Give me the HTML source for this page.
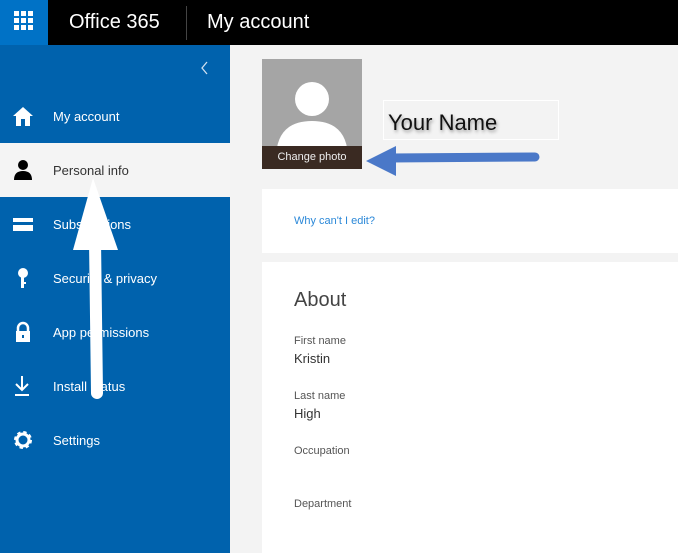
<!DOCTYPE html>
<html><head><style>
*{margin:0;padding:0;box-sizing:border-box}
body{width:678px;height:553px;overflow:hidden;background:#f3f3f3;font-family:"Liberation Sans",sans-serif;position:relative}
.abs{position:absolute}
.top{left:0;top:0;width:678px;height:45px;background:#000}
.waf{left:0;top:0;width:48px;height:45px;background:#0072c6}
.side{left:0;top:45px;width:230px;height:508px;background:#0062ad}
.item{position:absolute;left:0;width:230px;height:54px;color:#fff;font-size:13px}
.item span{position:absolute;left:53px;top:20px}
.item svg{position:absolute;left:12px;top:16px}
.lbl{color:#555;font-size:11px;position:absolute;left:32px}
.val{color:#333;font-size:13px;position:absolute;left:32px}
</style></head><body>
<div class="abs top"></div>
<div class="abs waf">
<svg width="48" height="45"><g fill="#fff">
<rect x="14" y="11" width="5" height="5"/><rect x="21" y="11" width="5" height="5"/><rect x="28" y="11" width="5" height="5"/>
<rect x="14" y="18" width="5" height="5"/><rect x="21" y="18" width="5" height="5"/><rect x="28" y="18" width="5" height="5"/>
<rect x="14" y="25" width="5" height="5"/><rect x="21" y="25" width="5" height="5"/><rect x="28" y="25" width="5" height="5"/></g></svg></div>
<div class="abs" style="left:69px;top:11px;color:#fff;font-size:20px">Office 365</div>
<div class="abs" style="left:186px;top:6px;width:1px;height:34px;background:#444"></div>
<div class="abs" style="left:207px;top:11px;color:#fff;font-size:20px">My account</div>
<div class="abs side">
<svg style="position:absolute;left:200px;top:16px" width="10" height="14"><path d="M7 1 L2 7 L7 13" stroke="#cfe0f0" stroke-width="1.3" fill="none"/></svg>
<div class="item" style="top:44px"><svg width="22" height="22"><path d="M11 2 L21 11 L18 11 L18 21 L4 21 L4 11 L1 11Z" fill="#fff"/><rect x="9" y="14" width="4" height="7" fill="#0062ad"/></svg><span>My account</span></div>
<div class="item" style="top:98px;background:#f4f4f4;color:#333"><svg width="22" height="22"><circle cx="11" cy="6" r="5" fill="#000"/><path d="M2 21 Q2 12 11 12 Q20 12 20 21Z" fill="#000"/></svg><span>Personal info</span></div>
<div class="item" style="top:152px"><svg width="22" height="22"><rect x="1" y="5" width="20" height="13" fill="#fff"/><rect x="1" y="9" width="20" height="3" fill="#0062ad"/></svg><span>Subscriptions</span></div>
<div class="item" style="top:206px"><svg width="22" height="22"><circle cx="11" cy="6" r="5" fill="#fff"/><rect x="9" y="9" width="3" height="12" fill="#fff"/><rect x="12" y="15" width="2" height="2" fill="#fff"/></svg><span>Security &amp; privacy</span></div>
<div class="item" style="top:260px"><svg width="22" height="22"><path d="M6 10 V7 A5 5 0 0 1 16 7 V10" stroke="#fff" stroke-width="2.5" fill="none"/><rect x="4" y="10" width="14" height="11" fill="#fff"/><rect x="10" y="14" width="2" height="3" fill="#0062ad"/></svg><span>App permissions</span></div>
<div class="item" style="top:314px"><svg width="22" height="22"><path d="M10 1 V14 M4 9 L10 15 L16 9 M3 20 H17" stroke="#fff" stroke-width="2" fill="none"/></svg><span>Install status</span></div>
<div class="item" style="top:368px"><svg width="22" height="22"><circle cx="11" cy="11" r="7" fill="none" stroke="#fff" stroke-width="4" stroke-dasharray="3 2.5"/><circle cx="11" cy="11" r="6" fill="none" stroke="#fff" stroke-width="3"/></svg><span>Settings</span></div>
</div>
<div class="abs" style="left:262px;top:59px;width:100px;height:110px;background:#a5a5a5;overflow:hidden">
<svg width="100" height="110"><circle cx="50" cy="40" r="17" fill="#fff"/><path d="M14 100 Q14 62 50 62 Q86 62 86 100Z" fill="#fff"/></svg>
<div style="position:absolute;left:0;top:87px;width:100px;height:23px;background:#3a2a22;color:#eee;font-size:11px;text-align:center;line-height:22px">Change photo</div></div>
<div class="abs" style="left:383px;top:100px;width:176px;height:40px;border:1px solid #fff"></div>
<div class="abs" style="left:388px;top:110px;font-size:22px;color:#111;text-shadow:1px 2px 3px #999">Your Name</div>
<svg class="abs" style="left:360px;top:140px" width="185" height="45"><path d="M30 18 L175 17" stroke="#4a78c8" stroke-width="9" stroke-linecap="round"/><path d="M6 21 L36 6 L36 36Z" fill="#4a78c8"/></svg>
<div class="abs" style="left:262px;top:189px;width:416px;height:64px;background:#fff"><div style="position:absolute;left:32px;top:26px;color:#2b88d8;font-size:11px">Why can't I edit?</div></div>
<div class="abs" style="left:262px;top:262px;width:416px;height:291px;background:#fff">
<div style="position:absolute;left:32px;top:27px;font-size:20px;color:#444">About</div>
<div class="lbl" style="top:73px">First name</div><div class="val" style="top:89px">Kristin</div>
<div class="lbl" style="top:128px">Last name</div><div class="val" style="top:144px">High</div>
<div class="lbl" style="top:183px">Occupation</div>
<div class="lbl" style="top:236px">Department</div>
</div>
<svg class="abs" style="left:60px;top:170px" width="70" height="235"><path d="M37 223 L35 70" stroke="#fff" stroke-width="12" stroke-linecap="round"/><path d="M33 8 L58 80 L13 80Z" fill="#fff"/></svg>
</body></html>
